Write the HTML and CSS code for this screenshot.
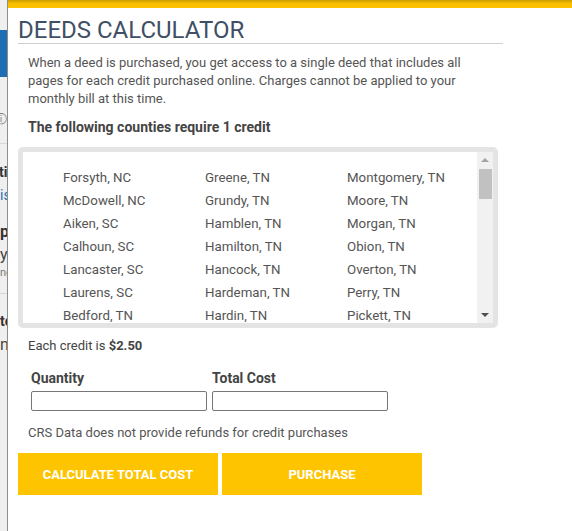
FILE: index.html
```html
<!DOCTYPE html>
<html lang="en">
<head>
<meta charset="utf-8">
<title>Deeds Calculator</title>
<link rel="stylesheet" href="styles.css">
</head>
<body>
<div class="screen">
  <aside class="under">
    <div class="u-blue"></div>
    <div class="u-info">ⓘ</div>
    <div class="u-rule"></div>
    <div class="u-head u-first">tions</div>
    <div class="u-link">is</div>
    <div class="u-head u-gap">p</div>
    <div class="u-text">y</div>
    <div class="u-small">ng</div>
    <div class="u-rule u-rule2"></div>
    <div class="u-head u-gap2">te</div>
    <div class="u-text">ne</div>
  </aside>
  <section class="modal">
    <div class="modal-top"></div>
    <div class="modal-body">
      <h1 class="title">DEEDS CALCULATOR</h1>
      <p class="intro">When a deed is purchased, you get access to a single deed that includes all pages for each credit purchased online. Charges cannot be applied to your monthly bill at this time.</p>
      <p class="req">The following counties require 1 credit</p>
      <div class="county-box">
        <div class="county-scroll">
          <div class="county-cols">
            <ul class="col">
              <li>Forsyth, NC</li><li>McDowell, NC</li><li>Aiken, SC</li><li>Calhoun, SC</li><li>Lancaster, SC</li><li>Laurens, SC</li><li>Bedford, TN</li><li>Benton, TN</li><li>Bledsoe, TN</li><li>Blount, TN</li><li>Bradley, TN</li><li>Campbell, TN</li><li>Cannon, TN</li><li>Carroll, TN</li><li>Carter, TN</li><li>Cheatham, TN</li><li>Chester, TN</li><li>Claiborne, TN</li><li>Clay, TN</li><li>Cocke, TN</li><li>Coffee, TN</li><li>Crockett, TN</li><li>Cumberland, TN</li><li>Davidson, TN</li><li>Decatur, TN</li><li>DeKalb, TN</li><li>Dickson, TN</li><li>Dyer, TN</li><li>Fayette, TN</li><li>Fentress, TN</li><li>Franklin, TN</li><li>Gibson, TN</li><li>Giles, TN</li><li>Grainger, TN</li>
            </ul>
            <ul class="col">
              <li>Greene, TN</li><li>Grundy, TN</li><li>Hamblen, TN</li><li>Hamilton, TN</li><li>Hancock, TN</li><li>Hardeman, TN</li><li>Hardin, TN</li><li>Hawkins, TN</li><li>Haywood, TN</li><li>Henderson, TN</li><li>Henry, TN</li><li>Hickman, TN</li><li>Houston, TN</li><li>Humphreys, TN</li><li>Jackson, TN</li><li>Jefferson, TN</li><li>Johnson, TN</li><li>Knox, TN</li><li>Lake, TN</li><li>Lauderdale, TN</li><li>Lawrence, TN</li><li>Lewis, TN</li><li>Lincoln, TN</li><li>Loudon, TN</li><li>McMinn, TN</li><li>McNairy, TN</li><li>Macon, TN</li><li>Madison, TN</li><li>Marion, TN</li><li>Marshall, TN</li><li>Maury, TN</li><li>Meigs, TN</li><li>Monroe, TN</li>
            </ul>
            <ul class="col">
              <li>Montgomery, TN</li><li>Moore, TN</li><li>Morgan, TN</li><li>Obion, TN</li><li>Overton, TN</li><li>Perry, TN</li><li>Pickett, TN</li><li>Polk, TN</li><li>Putnam, TN</li><li>Rhea, TN</li><li>Roane, TN</li><li>Robertson, TN</li><li>Rutherford, TN</li><li>Scott, TN</li><li>Sequatchie, TN</li><li>Sevier, TN</li><li>Shelby, TN</li><li>Smith, TN</li><li>Stewart, TN</li><li>Sullivan, TN</li><li>Sumner, TN</li><li>Tipton, TN</li><li>Trousdale, TN</li><li>Unicoi, TN</li><li>Union, TN</li><li>Van Buren, TN</li><li>Warren, TN</li><li>Washington, TN</li><li>Wayne, TN</li><li>Weakley, TN</li><li>White, TN</li><li>Williamson, TN</li><li>Wilson, TN</li>
            </ul>
          </div>
        </div>
        <div class="vbar" aria-hidden="true">
          <div class="vbar-btn"><span class="arrow-up"></span></div>
          <div class="vbar-thumb"></div>
          <div class="vbar-track"></div>
          <div class="vbar-btn"><span class="arrow-down"></span></div>
        </div>
      </div>
      <p class="price">Each credit is <b>$2.50</b></p>
      <div class="calc">
        <label class="calc-label" for="qty">Quantity</label>
        <label class="calc-label" for="total">Total Cost</label>
        <input class="calc-input" id="qty" type="text">
        <input class="calc-input" id="total" type="text">
      </div>
      <p class="note">CRS Data does not provide refunds for credit purchases</p>
      <div class="actions">
        <button class="btn" type="button">Calculate Total Cost</button>
        <button class="btn" type="button">Purchase</button>
      </div>
    </div>
  </section>
</div>
</body>
</html>
```
FILE: styles.css
```css
html, body {
  margin: 0;
  padding: 0;
  background: #fff;
}
body {
  font-family: Roboto, "Liberation Sans", Arial, sans-serif;
  font-size: 14px;
  color: #555;
}
.screen {
  display: flex;
  height: 531px;
  overflow: hidden;
}

/* page underneath the dialog */
.under {
  flex: none;
  width: 7px;
  background: #efefef;
  border-right: 1px solid #8e8e8e;
  overflow: hidden;
  white-space: nowrap;
  padding-top: 30px;
}
.u-blue {
  height: 47px;
  background: #1f6db2;
}
.u-info {
  margin-top: 35px;
  margin-left: -5px;
  font-size: 12px;
  line-height: 14px;
  color: #777;
}
.u-rule {
  margin-top: 17px;
  border-top: 1px solid #d8d8d8;
}
.u-rule2 {
  margin-top: 13px;
}
.u-head {
  font-weight: 700;
  font-size: 14px;
  line-height: 23px;
  color: #333;
}
.u-first { margin-top: 17px; margin-left: -1px; }
.u-gap { margin-top: 13px; font-size: 16px; }
.u-gap2 { margin-top: 16px; }
.u-link {
  font-size: 14px;
  line-height: 23px;
  color: #1f6db2;
}
.u-text {
  font-size: 16px;
  line-height: 23px;
  color: #444;
}
.u-small {
  font-size: 11px;
  line-height: 14px;
  color: #777;
}

/* dialog */
.modal {
  flex: 1;
  background: #fff;
  display: flex;
  flex-direction: column;
}
.modal-top {
  height: 8px;
  background: linear-gradient(#c99d00, #f6bd00 40%, #ffc400);
}
.modal-body {
  padding: 9px 10px 0 10px;
}
.title {
  margin: 0;
  width: 485px;
  font-family: Roboto, "Liberation Sans", Arial, sans-serif;
  font-weight: 400;
  font-size: 24px;
  line-height: 26px;
  color: #3f4f66;
  border-bottom: 1px solid #cfcfcf;
}
.intro {
  margin: 10px 0 0 10px;
  width: 452px;
  font-size: 13px;
  line-height: 18px;
  color: #555;
}
.req {
  margin: 10px 0 0 10px;
  line-height: 18px;
  font-weight: 700;
  color: #444;
}
.county-box {
  margin-top: 11px;
  width: 480px;
  height: 181px;
  box-sizing: border-box;
  border: 5px solid #e4e4e4;
  border-radius: 5px;
  background: #fff;
  display: flex;
}
.county-scroll {
  flex: 1;
  min-width: 0;
  overflow-y: auto;
  scrollbar-width: none;
}
.county-cols {
  display: flex;
  padding: 14px 0 14px 40px;
}
.col {
  list-style: none;
  margin: 0;
  padding: 0;
  width: 142px;
  flex: none;
}
.col li {
  font-size: 13.3px;
  line-height: 23px;
  color: #555;
}

/* drawn scrollbar */
.vbar {
  flex: none;
  width: 16px;
  background: #f1f1f1;
  display: flex;
  flex-direction: column;
}
.vbar-btn {
  height: 16px;
  display: flex;
  align-items: center;
  justify-content: center;
}
.arrow-up {
  width: 0;
  height: 0;
  border-left: 4px solid transparent;
  border-right: 4px solid transparent;
  border-bottom: 4px solid #a3a3a3;
}
.arrow-down {
  width: 0;
  height: 0;
  border-left: 4px solid transparent;
  border-right: 4px solid transparent;
  border-top: 4px solid #505050;
}
.vbar-thumb {
  height: 30px;
  margin: 1px 1px 0 2px;
  background: #c1c1c1;
}
.vbar-track {
  flex: 1;
}

.price {
  margin: 9px 0 0 10px;
  font-size: 13px;
  line-height: 18px;
  color: #444;
}
.calc {
  margin: 14px 0 0 13px;
  display: grid;
  grid-template-columns: 176px 176px;
  column-gap: 5px;
  row-gap: 4px;
}
.calc-label {
  font-weight: 700;
  line-height: 18px;
  color: #444;
}
.calc-input {
  box-sizing: border-box;
  width: 176px;
  height: 20px;
  margin: 0;
  padding: 1px 3px;
  border: 1px solid #767676;
  border-radius: 2px;
  background: #fff;
  font: 13px Roboto, "Liberation Sans", Arial, sans-serif;
}
.note {
  margin: 13px 0 0 10px;
  font-size: 13px;
  line-height: 18px;
  color: #555;
}
.actions {
  margin-top: 11px;
  display: flex;
  gap: 4px;
}
.btn {
  width: 200px;
  height: 42px;
  padding: 0;
  border: 0;
  background: #ffc400;
  color: #fff;
  font-family: Roboto, "Liberation Sans", Arial, sans-serif;
  font-weight: 700;
  font-size: 13px;
  text-transform: uppercase;
  cursor: pointer;
}
```
